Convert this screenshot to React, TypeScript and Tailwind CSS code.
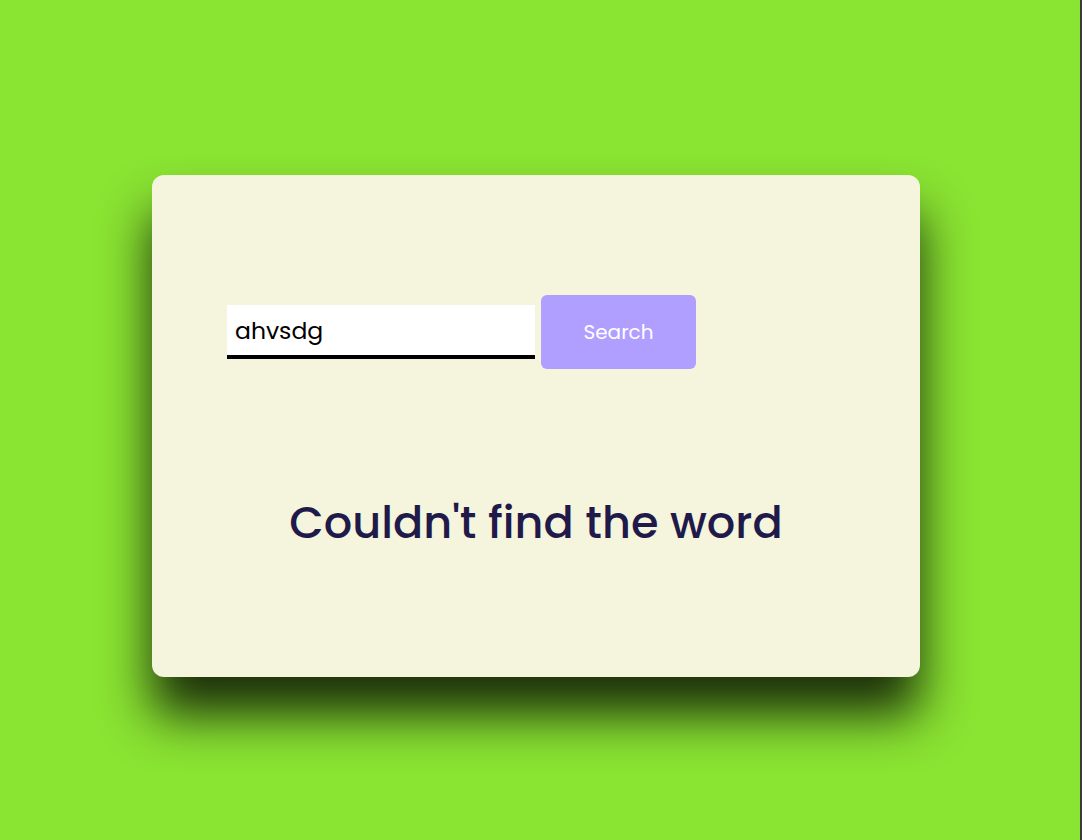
import { useState } from 'react';

function App() {
  const [word, setWord] = useState('ahvsdg');

  return (
    <div
      className="w-screen h-screen bg-[#8ae432] flex justify-center pt-[175px] pr-[8px] border-r-2 border-[#3a3a3a]"
      style={{ fontFamily: '"Poppins", "Open Sans", sans-serif' }}
    >
      <div className="w-[768px] h-[502px] bg-[#f5f4dc] rounded-[12px] shadow-[0_38px_50px_0_rgba(0,0,0,0.8)] flex flex-col px-[75px] pt-[120px]">
        <div className="flex items-center gap-[6px]">
          <input
            value={word}
            onChange={(e) => setWord(e.target.value)}
            className="w-[308px] h-[54px] bg-white border-b-4 border-black px-[8px] text-[23.5px] text-black outline-none"
          />
          <button className="w-[155px] h-[74px] bg-[#b09fff] rounded-[6px] text-white text-[20px]">
            Search
          </button>
        </div>
        <h1 className="mt-[119px] text-center text-[#1f1a4a] text-[44.6px] font-medium leading-[69px]">
          Couldn't find the word
        </h1>
      </div>
    </div>
  );
}

export default App;
